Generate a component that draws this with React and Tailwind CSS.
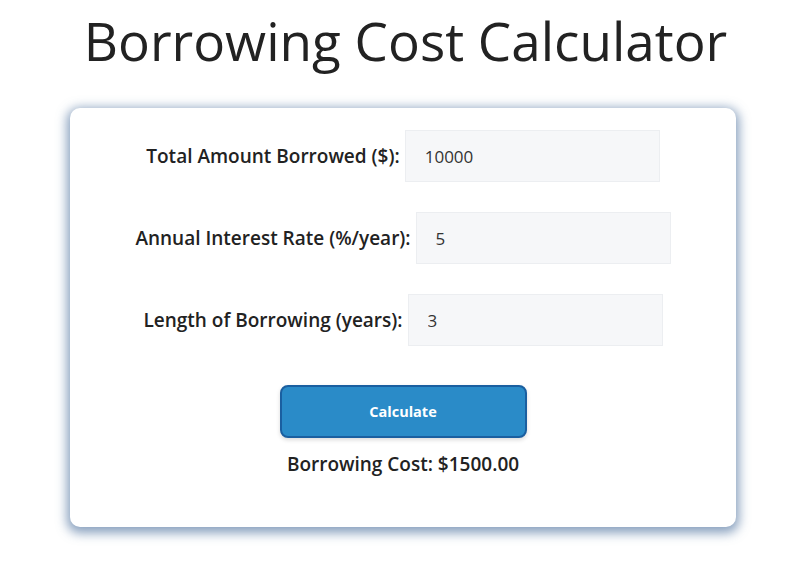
import { useState } from 'react';

const fields = [
  { id: 'amount', label: 'Total Amount Borrowed ($):' },
  { id: 'rate', label: 'Annual Interest Rate (%/year):' },
  { id: 'years', label: 'Length of Borrowing (years):' },
];

export default function App() {
  const [values, setValues] = useState({ amount: '10000', rate: '5', years: '3' });
  const [cost, setCost] = useState('1500.00');

  const handleCalculate = () => {
    const p = parseFloat(values.amount) || 0;
    const r = parseFloat(values.rate) || 0;
    const t = parseFloat(values.years) || 0;
    setCost(((p * r * t) / 100).toFixed(2));
  };

  return (
    <div
      className="min-h-[565px] w-full bg-white text-[#222]"
      style={{ fontFamily: '"Open Sans", "Noto Sans", sans-serif' }}
    >
      <h1 className="pt-[1px] text-center text-[53px] leading-[80px] font-normal text-[#222]">
        Borrowing Cost Calculator
      </h1>

      <div className="ml-[70px] mr-[75px] mt-[27px] h-[419px] rounded-[10px] bg-white pt-[22px] shadow-[0_3px_11px_3px_rgba(96,128,168,0.75)]">
        <div className="flex flex-col items-center gap-[30px]">
          {fields.map((f) => (
            <div key={f.id} className="flex items-center gap-[5px]">
              <label htmlFor={f.id} className="text-[19px] font-semibold text-[#222]">
                {f.label}
              </label>
              <input
                id={f.id}
                type="text"
                value={values[f.id]}
                onChange={(e) => setValues({ ...values, [f.id]: e.target.value })}
                className="h-[52px] w-[255px] border border-[#eceef1] bg-[#f6f7f9] px-[19px] text-[17px] text-[#333] outline-none"
              />
            </div>
          ))}
        </div>

        <div className="mt-[39px] flex flex-col items-center">
          <button
            onClick={handleCalculate}
            className="h-[53px] w-[247px] rounded-[8px] border-2 border-[#1a5fa0] bg-[#2a8bc8] text-[14.5px] font-bold text-white shadow-[0_2px_4px_rgba(0,0,0,0.15)]"
          >
            Calculate
          </button>
          <p className="mt-[12px] text-[19px] font-semibold text-[#222]">Borrowing Cost: ${cost}</p>
        </div>
      </div>
    </div>
  );
}
